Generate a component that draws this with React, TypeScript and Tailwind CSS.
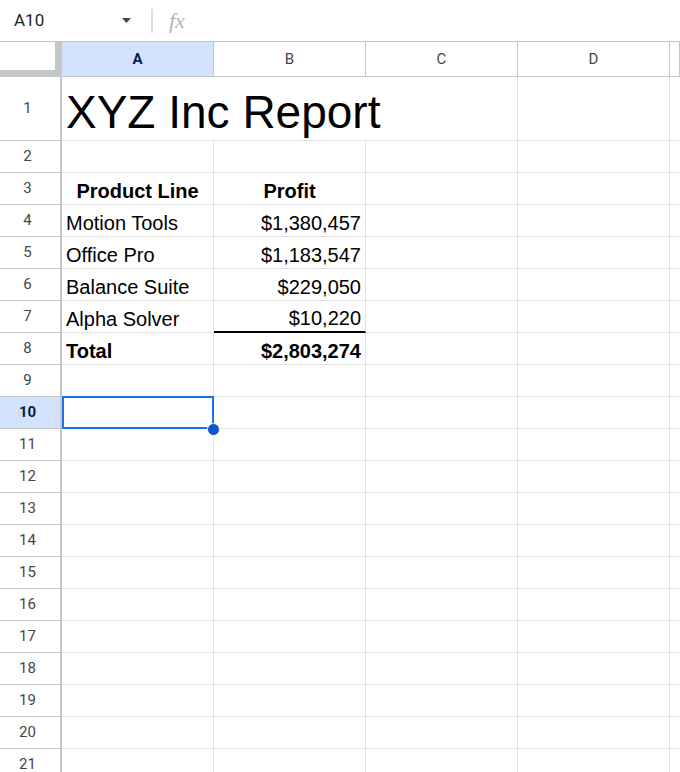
import React from "react";

const COLS = ["A", "B", "C", "D", ""];

type Cell = { text?: string; bold?: boolean; align?: "left" | "center" | "right" };

// row number -> [A, B]
const DATA: Record<number, [Cell, Cell]> = {
  3: [
    { text: "Product Line", bold: true, align: "center" },
    { text: "Profit", bold: true, align: "center" },
  ],
  4: [{ text: "Motion Tools" }, { text: "$1,380,457", align: "right" }],
  5: [{ text: "Office Pro" }, { text: "$1,183,547", align: "right" }],
  6: [{ text: "Balance Suite" }, { text: "$229,050", align: "right" }],
  7: [{ text: "Alpha Solver" }, { text: "$10,220", align: "right" }],
  8: [
    { text: "Total", bold: true },
    { text: "$2,803,274", bold: true, align: "right" },
  ],
};

const rows = Array.from({ length: 21 }, (_, i) => i + 1);

function CellText({ cell }: { cell?: Cell }) {
  if (!cell?.text) return null;
  return (
    <div
      className={
        "w-full px-[4px] pb-[2px] text-[20px] leading-[22px] text-black whitespace-nowrap " +
        (cell.bold ? "font-bold " : "font-normal ") +
        (cell.align === "right" ? "text-right" : cell.align === "center" ? "text-center" : "text-left")
      }
    >
      {cell.text}
    </div>
  );
}

export default function App() {
  return (
    <div className="w-[680px] h-[772px] overflow-hidden bg-white font-['Roboto',sans-serif]">
      {/* Name box / formula bar */}
      <div className="flex items-center h-[41px]">
        <div className="flex items-center justify-between w-[140px] pl-[14px] pr-[9px]">
          <span className="text-[17px] text-[#1f1f1f]">A10</span>
          <svg width="9" height="5" viewBox="0 0 9 5">
            <path d="M0 0 L9 0 L4.5 5 Z" fill="#444746" />
          </svg>
        </div>
        <div className="ml-[11px] w-[2px] h-[24px] bg-[#dadce0]" />
        <span className="ml-[16px] text-[22px] italic text-[#b4b4b4] font-['Liberation_Serif',serif] leading-none">
          fx
        </span>
      </div>

      {/* Sheet grid */}
      <div className="grid grid-cols-[62px_152px_152px_152px_152px_1fr] border-t border-[#c4c7c5]">
        {/* Column headers */}
        <div className="h-[35px] bg-[#c4c7c5] border-b border-[#c4c7c5]">
          <div className="w-[55px] h-[28px] bg-white" />
        </div>
        {COLS.map((c) => (
          <div
            key={"h" + c}
            className={
              "h-[35px] flex items-center justify-center border-r border-b border-[#c4c7c5] text-[15px] " +
              (c === "A" ? "bg-[#d3e3fd] text-[#041e49] font-bold" : "bg-white text-[#444746]")
            }
          >
            {c}
          </div>
        ))}

        {rows.map((r) => {
          const h = r === 1 ? "h-[64px]" : "h-[32px]";
          const sel = r === 10;
          const [a, b] = DATA[r] ?? [undefined, undefined];
          return (
            <React.Fragment key={r}>
              <div
                className={
                  h +
                  " flex items-center justify-center pr-[5px] border-r-2 border-b border-[#c4c7c5] text-[15px] " +
                  (sel ? "bg-[#d3e3fd] text-[#041e49] font-bold" : "bg-white text-[#444746]")
                }
              >
                {r}
              </div>

              {/* Column A */}
              <div
                className={
                  h +
                  " relative flex items-end border-r border-b border-[#e1e1e1] font-['Liberation_Sans',Arial,sans-serif]" +
                  (r === 1 ? " border-r-white z-10" : "")
                }
              >
                {r === 1 ? (
                  <div className="pl-[4px] pb-[2px] text-[46px] leading-[52px] text-black whitespace-nowrap">
                    XYZ Inc Report
                  </div>
                ) : (
                  <CellText cell={a} />
                )}
                {sel && (
                  <>
                    <div className="absolute top-[-1px] left-0 right-[-1px] bottom-[-1px] border-2 border-[#1a73e8]" />
                    <div className="absolute right-[-7px] bottom-[-8px] w-[13px] h-[13px] rounded-full bg-[#0b57d0] border border-white z-20" />
                  </>
                )}
              </div>

              {/* Column B */}
              <div
                className={
                  h +
                  " flex items-end border-r border-[#e1e1e1] font-['Liberation_Sans',Arial,sans-serif] " +
                  (r === 1 ? "border-b border-r-white" : r === 7 ? "border-b-2 border-b-black" : "border-b")
                }
              >
                {r === 1 ? null : <CellText cell={b} />}
              </div>

              {/* Column C, D, E */}
              <div className={h + " border-r border-b border-[#e1e1e1]"} />
              <div className={h + " border-r border-b border-[#e1e1e1]"} />
              <div className={h + " border-b border-[#e1e1e1]"} />
            </React.Fragment>
          );
        })}
      </div>
    </div>
  );
}
